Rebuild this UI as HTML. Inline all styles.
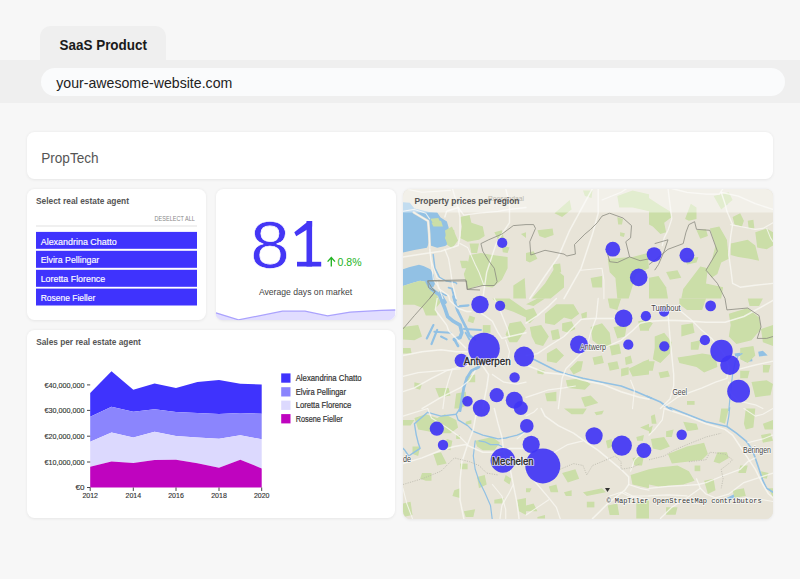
<!DOCTYPE html>
<html><head><meta charset="utf-8">
<style>
*{margin:0;padding:0;box-sizing:border-box}
html,body{width:800px;height:579px;overflow:hidden;background:#f7f7f7;font-family:"Liberation Sans",sans-serif;position:relative}
.a{position:absolute}
.card{position:absolute;background:#fff;border-radius:7.5px;box-shadow:0 0.5px 3px rgba(0,0,0,0.07)}
svg{position:absolute;left:0;top:0}
text{font-family:"Liberation Sans",sans-serif}
</style></head><body>
<div class="a" style="left:0;top:60px;width:800px;height:43px;background:#efefef"></div>
<div class="a" style="left:40px;top:26px;width:126px;height:40px;background:#efefef;border-radius:11px 11px 0 0"></div>
<div class="a" style="left:41px;top:68px;width:744px;height:28px;background:#fafbfc;border-radius:14px"></div>

<div class="card" style="left:27px;top:132px;width:746px;height:47px"></div>
<div class="card" style="left:26.5px;top:189px;width:179.5px;height:131.3px"></div>
<div class="card" style="left:215.5px;top:189px;width:180px;height:131.3px;overflow:hidden"></div>
<div class="card" style="left:27px;top:330px;width:368px;height:188px"></div>
<div class="card" id="map" style="left:403px;top:188.5px;width:370px;height:330px;overflow:hidden;background:#e8e4d8"><svg width="370" height="330" viewBox="403 188.5 370 330" style="position:absolute;left:0;top:0">
<defs><filter id="bl" x="0" y="0" width="1" height="1"><feGaussianBlur stdDeviation="0.35"/></filter></defs>
<rect x="403" y="188.5" width="370" height="330" fill="#e8e4d8"/>
<g filter="url(#bl)"><g fill="#92c1e4">
<polygon points="403.0,201.7 409.8,202.3 414.4,208.0 429.2,211.4 437.2,211.9 440.6,217.1 446.9,221.1 448.6,226.8 449.8,235.9 448.6,242.7 445.2,245.6 437.2,247.3 430.4,245.0 429.2,241.6 427.0,247.3 414.4,249.6 403.0,251.9"/>
<polygon points="403.0,268.8 409.8,266.5 419.0,264.3 423.5,265.4 430.4,268.8 433.8,274.5 434.4,280.2 434.9,283.6 433.2,287.1 429.2,285.9 427.0,281.4 420.1,280.2 412.1,282.5 403.0,285.4"/>
<polygon points="723.1,199.4 726.9,199.4 727.8,204.1 724.0,204.1"/>
<polygon points="743.9,356.9 751.5,355.0 752.5,360.7 744.9,361.6"/>
<polygon points="758.2,351.2 762.9,350.2 767.7,355.0 759.1,355.9"/>
<polygon points="734.5,353.1 742.0,352.1 743.0,355.0 735.4,355.9"/>
<polygon points="726.9,497.3 734.5,493.5 736.4,497.3 728.8,499.2"/>
</g>
<g fill="#cbdea8">
<polygon points="403.0,285.4 412.1,282.5 420.1,280.2 427.0,281.4 430.4,288.2 437.2,295.0 440.6,301.9 434.9,308.7 425.8,308.7 414.4,304.2 403.0,304.2"/>
<polygon points="430.4,218.2 438.3,217.6 440.6,222.2 432.6,222.2"/>
<polygon points="445.0,230.0 452.0,226.0 458.0,240.0 452.0,248.0 447.0,244.0"/>
<polygon points="460.0,216.5 469.5,214.6 471.4,222.2 482.8,226.0 484.7,235.5 479.0,239.3 467.6,241.2 460.0,237.4 461.9,226.0"/>
<polygon points="448.6,227.9 454.3,229.8 454.3,241.2 448.6,245.0 444.8,237.4"/>
<polygon points="469.5,243.1 479.0,243.1 477.1,252.6 471.4,252.6"/>
<polygon points="469.5,254.5 480.9,252.6 492.4,254.5 507.6,256.4 507.6,267.8 501.9,279.3 492.4,286.9 479.0,285.0 467.6,288.8 463.8,273.6 467.6,264.0"/>
<polygon points="460.0,260.2 467.6,260.2 469.5,267.8 461.9,267.8"/>
<polygon points="494.3,231.7 501.9,229.8 503.8,237.4 498.1,239.3"/>
<polygon points="501.9,245.0 509.5,246.9 507.6,252.6 502.8,251.7"/>
<polygon points="513.3,285.0 524.7,277.4 526.0,298.1 513.3,298.1"/>
<polygon points="520.9,233.6 526.0,231.7 526.0,237.4"/>
<polygon points="431.5,222.2 441.0,220.3 442.9,226.0 433.4,226.0"/>
<polygon points="403.0,326.5 418.2,324.6 422.0,336.0 414.4,339.8 403.0,338.9"/>
<polygon points="403.0,347.4 410.6,347.4 411.6,353.1 403.0,353.1"/>
<polygon points="435.3,387.4 448.6,387.4 450.5,395.0 439.1,396.9"/>
<polygon points="465.7,375.9 475.2,374.0 475.2,381.7 466.7,381.7"/>
<polygon points="456.2,393.1 465.7,391.2 467.6,404.5 460.0,408.1 454.3,408.1"/>
<polygon points="469.5,315.1 475.2,317.0 473.3,322.7 467.6,320.8"/>
<polygon points="482.8,324.6 490.5,324.6 490.5,332.2 482.8,332.2"/>
<polygon points="509.5,322.7 520.9,320.8 526.0,328.4 517.1,341.7 509.5,341.7 505.7,334.1"/>
<polygon points="492.4,298.0 509.5,298.0 526.0,309.4 526.0,317.0 513.3,311.3 501.9,307.5"/>
<polygon points="422.0,305.6 435.3,305.6 437.2,315.1 425.8,315.1"/>
<polygon points="414.4,381.7 422.0,383.6 420.1,389.3 414.4,387.4"/>
<polygon points="414.4,417.5 425.8,413.7 437.2,417.5 444.8,413.7 456.2,419.4 458.1,427.0 450.5,432.7 437.2,432.7 427.7,430.8 418.2,428.9"/>
<polygon points="403.0,419.4 414.4,419.4 410.6,425.1 403.0,425.1"/>
<polygon points="465.7,421.3 471.4,419.4 471.4,423.2 465.7,424.2"/>
<polygon points="456.2,434.6 460.0,434.6 460.0,438.4 456.2,438.4"/>
<polygon points="446.7,438.4 452.4,440.3 450.5,449.8 444.8,447.9"/>
<polygon points="433.4,453.6 441.0,451.7 446.7,463.1 437.2,465.0"/>
<polygon points="422.0,472.6 431.5,472.6 431.5,480.2 425.8,480.2 420.1,478.3"/>
<polygon points="403.0,503.1 410.6,501.2 412.5,514.5 403.0,516.4"/>
<polygon points="475.2,440.3 492.4,436.5 500.0,442.2 494.3,449.8 482.8,449.8 477.1,446.0"/>
<polygon points="460.0,463.1 467.6,463.1 467.6,468.8 460.0,468.8"/>
<polygon points="477.1,476.4 484.7,474.5 486.7,484.0 479.0,487.8"/>
<polygon points="454.3,489.7 460.0,487.8 460.0,497.4 452.4,495.5"/>
<polygon points="494.3,499.3 503.8,497.4 501.9,503.1 494.3,503.1"/>
<polygon points="463.8,510.7 475.2,508.8 473.3,516.4 465.7,516.4"/>
<polygon points="505.7,474.5 511.4,478.3 509.5,484.0 503.8,480.2"/>
<polygon points="517.1,499.3 526.0,497.4 526.0,514.5 519.0,510.7"/>
<polygon points="412.5,446.0 420.1,446.0 418.2,455.5 412.5,453.6"/>
<polygon points="554.5,212.7 569.7,199.4 571.6,208.9 562.1,216.5"/>
<polygon points="537.4,229.8 552.6,227.9 553.6,234.6 545.0,237.4 539.3,235.5"/>
<polygon points="526.0,252.6 533.6,250.7 537.4,258.3 529.8,262.1 526.0,260.2"/>
<polygon points="531.7,298.1 545.0,283.1 554.5,267.8 564.0,275.5 564.0,286.9 550.7,298.1"/>
<polygon points="590.6,277.4 602.0,275.5 602.0,286.9 592.5,286.9"/>
<polygon points="607.7,258.3 632.5,256.4 647.7,252.6 649.0,267.8 636.3,273.6 628.7,298.1 617.3,298.1 615.4,277.4 609.7,271.7"/>
<polygon points="617.3,216.5 623.0,218.4 622.0,224.1 618.2,224.1"/>
<polygon points="620.1,231.7 624.9,232.7 623.9,236.5 620.1,235.5"/>
<polygon points="617.3,195.6 632.5,189.9 649.0,193.7 649.0,210.8 632.5,207.0 619.2,207.0"/>
<polygon points="583.0,189.9 592.5,189.9 591.6,197.5 584.9,195.6"/>
<polygon points="552.6,264.0 560.2,263.1 561.2,271.7 554.5,273.6"/>
<polygon points="526.0,309.4 533.6,307.5 537.4,315.1 529.8,322.7 526.0,320.8"/>
<polygon points="545.0,313.2 556.4,303.7 573.5,303.7 579.2,313.2 571.6,318.9 564.0,317.0 554.5,324.6 545.0,322.7"/>
<polygon points="562.1,322.7 571.6,320.8 575.4,328.4 567.8,332.2 562.1,330.3"/>
<polygon points="529.8,326.5 541.2,324.6 548.8,336.0 543.1,345.5 535.5,343.6 531.7,336.0"/>
<polygon points="550.7,330.3 558.3,328.4 560.2,337.9 552.6,339.8"/>
<polygon points="526.0,303.7 537.4,298.0 545.0,298.0 533.6,305.6"/>
<polygon points="581.1,313.2 586.8,311.3 586.8,317.0 582.1,318.0"/>
<polygon points="590.6,326.5 602.0,322.7 609.7,332.2 611.6,345.5 602.0,347.4 592.5,339.8"/>
<polygon points="609.7,345.5 619.2,343.6 621.1,353.1 611.6,355.0"/>
<polygon points="607.7,298.0 621.1,298.0 617.3,309.4 609.7,307.5"/>
<polygon points="613.5,326.5 626.8,324.6 624.9,336.0 617.3,337.9"/>
<polygon points="638.2,320.8 649.0,318.9 649.0,330.3 640.1,330.3"/>
<polygon points="577.3,360.7 583.0,360.7 581.1,370.2 573.5,374.0 569.7,368.3"/>
<polygon points="546.9,353.1 556.4,347.4 564.0,355.0 556.4,362.6 546.9,360.7"/>
<polygon points="592.5,356.9 602.0,355.0 603.9,362.6 594.4,364.5"/>
<polygon points="607.7,362.6 617.3,360.7 619.2,368.3 609.7,370.2"/>
<polygon points="624.9,356.9 630.6,355.0 632.5,362.6 625.8,364.5"/>
<polygon points="628.7,368.3 643.9,360.7 649.0,358.8 649.0,374.0 632.5,375.9"/>
<polygon points="565.9,379.7 581.1,377.8 590.6,383.6 584.9,389.3 567.8,387.4"/>
<polygon points="581.1,396.9 590.6,395.0 598.2,402.6 584.9,406.4"/>
<polygon points="621.1,368.3 628.7,366.4 628.7,374.0 621.1,375.9"/>
<polygon points="545.0,393.1 556.4,391.2 556.4,400.7 546.9,400.7"/>
<polygon points="537.4,368.3 545.0,370.2 543.1,374.0 537.4,373.1"/>
<polygon points="564.0,408.0 586.8,408.0 583.0,413.7 571.6,413.7"/>
<polygon points="594.4,411.8 603.9,409.9 602.0,413.7 596.3,414.7"/>
<polygon points="605.8,440.3 611.6,438.4 613.5,446.0 607.7,447.9"/>
<polygon points="562.1,472.6 575.4,468.8 579.2,478.3 567.8,482.1"/>
<polygon points="548.8,485.9 556.4,484.0 558.3,491.7 550.7,491.7"/>
<polygon points="564.0,491.7 571.6,489.7 571.6,495.5 565.9,495.5"/>
<polygon points="583.0,491.7 602.0,487.8 605.8,491.7 586.8,495.5"/>
<polygon points="632.5,457.4 643.9,455.5 642.0,465.0 634.4,465.0"/>
<polygon points="630.6,474.5 649.0,468.8 649.0,487.8 632.5,484.0"/>
<polygon points="636.3,436.5 643.9,434.6 642.9,440.3 637.2,440.3"/>
<polygon points="640.1,427.0 649.0,423.2 649.0,430.8"/>
<polygon points="526.0,487.8 531.7,487.8 529.8,491.7 526.0,491.7"/>
<polygon points="526.0,505.0 533.6,503.1 537.4,510.7 526.0,510.7"/>
<polygon points="607.7,505.0 617.3,503.1 619.2,514.5 609.7,514.5"/>
<polygon points="636.3,503.1 649.0,499.3 649.0,518.1 636.3,518.1"/>
<polygon points="586.8,501.2 594.4,501.2 594.4,506.9 586.8,506.9"/>
<polygon points="537.4,516.4 545.0,514.5 545.0,518.1 537.4,518.1"/>
<polygon points="649.0,197.5 660.4,205.1 669.9,210.8 671.8,216.5 664.2,222.2 666.1,231.7 660.4,233.6 652.8,226.0 649.0,224.1"/>
<polygon points="685.1,218.4 690.8,203.2 696.5,207.0 696.5,218.4 688.9,220.3"/>
<polygon points="696.5,229.8 706.0,228.8 707.9,235.5 700.3,238.3"/>
<polygon points="709.8,227.9 719.3,226.0 726.9,239.3 728.8,258.3 721.2,262.1 717.4,273.5 711.7,277.3 706.0,269.7 711.7,260.2 715.5,245.0"/>
<polygon points="730.7,243.1 747.7,239.3 755.3,245.0 759.1,260.2 749.6,258.3 738.3,256.4 730.7,254.5"/>
<polygon points="732.6,216.5 740.2,212.7 743.9,220.3 742.0,226.0 734.5,224.1"/>
<polygon points="747.7,220.3 753.4,219.3 754.4,227.9 748.7,227.9"/>
<polygon points="755.3,231.7 766.7,227.9 773.0,231.7 773.0,245.0 766.7,248.8 757.2,246.9"/>
<polygon points="649.0,277.3 658.5,275.4 666.1,286.7 668.0,298.0 649.0,298.0"/>
<polygon points="666.1,271.6 677.5,269.7 681.3,277.3 669.9,279.2"/>
<polygon points="683.2,288.6 700.3,265.9 707.9,267.8 706.0,282.9 723.1,286.7 721.2,298.0 681.3,298.0"/>
<polygon points="685.1,258.3 698.4,256.4 696.5,262.1 687.0,264.0"/>
<polygon points="713.6,195.6 728.8,191.8 732.6,199.4 721.2,208.9"/>
<polygon points="679.4,298.0 706.0,298.0 702.2,309.4 687.0,309.4 679.4,303.7"/>
<polygon points="649.0,320.8 652.8,322.7 649.0,328.4"/>
<polygon points="681.3,324.6 692.7,322.7 694.6,332.2 681.3,336.0"/>
<polygon points="654.7,336.0 664.2,332.2 671.8,341.7 669.9,353.1 660.4,362.6 652.8,358.8 654.7,347.4"/>
<polygon points="649.0,360.7 654.7,360.7 652.8,370.2 649.0,370.2"/>
<polygon points="728.8,313.2 747.7,307.5 759.1,317.0 761.0,328.4 751.5,339.8 736.4,343.6 728.8,336.0 730.7,324.6"/>
<polygon points="740.2,347.4 753.4,345.5 755.3,355.0 747.7,362.6 740.2,358.8"/>
<polygon points="747.7,298.0 762.9,298.0 759.1,305.6 749.6,305.6"/>
<polygon points="761.0,328.4 773.0,324.6 773.0,345.5 762.9,341.7"/>
<polygon points="677.5,356.9 690.8,355.0 702.2,353.1 715.5,355.0 717.4,366.4 704.1,372.1 696.5,366.4 679.4,362.6"/>
<polygon points="690.8,341.7 700.3,339.8 698.4,349.3 690.8,349.3"/>
<polygon points="658.5,372.1 668.0,370.2 669.9,375.9 660.4,377.8"/>
<polygon points="751.5,381.6 766.7,379.7 773.0,383.5 770.5,394.8 755.3,396.7"/>
<polygon points="740.2,370.2 749.6,370.2 747.7,377.8 740.2,377.8"/>
<polygon points="687.0,400.5 694.6,400.5 694.6,404.3 687.0,404.3"/>
<polygon points="762.9,364.5 770.5,364.5 768.6,372.1 762.9,372.1"/>
<polygon points="650.9,415.6 654.7,413.7 656.6,423.2 651.8,423.2"/>
<polygon points="649.0,427.0 652.8,425.1 650.9,432.7 649.0,432.7"/>
<polygon points="683.2,421.3 696.5,423.2 698.4,428.9 687.0,430.8"/>
<polygon points="666.1,430.8 673.7,428.9 671.8,436.5 666.1,436.5"/>
<polygon points="650.9,438.4 664.2,436.5 669.9,446.0 660.4,449.8 652.8,447.9"/>
<polygon points="668.0,453.6 687.0,446.0 704.1,442.2 707.9,453.6 702.2,459.3 687.0,461.2 671.8,463.1"/>
<polygon points="649.0,468.8 658.5,466.9 677.5,465.0 688.9,470.7 694.6,480.2 683.2,484.0 658.5,485.9 649.0,484.0"/>
<polygon points="717.4,451.7 726.9,451.7 728.8,457.4 719.3,463.1 713.6,461.2"/>
<polygon points="721.2,408.0 728.8,408.0 725.0,423.2 719.3,421.3"/>
<polygon points="745.8,408.0 755.3,408.0 753.4,427.0 745.8,428.9 743.9,423.2"/>
<polygon points="762.9,423.2 773.0,419.4 773.0,428.9 764.8,428.9"/>
<polygon points="761.0,434.6 770.5,432.7 773.0,440.3 762.9,442.2"/>
<polygon points="740.2,465.0 747.7,465.0 745.8,472.6 738.3,472.6"/>
<polygon points="704.1,480.2 713.6,478.3 715.5,489.7 707.9,493.5"/>
<polygon points="732.6,489.7 743.9,487.8 745.8,495.4 734.5,497.3"/>
<polygon points="694.6,465.0 700.3,465.0 700.3,470.7 694.6,470.7"/>
<polygon points="761.0,470.7 768.6,472.6 766.7,478.3 762.0,477.3"/>
<polygon points="768.6,487.8 773.0,487.8 773.0,497.3"/>
<polygon points="666.1,506.7 677.5,506.7 675.6,514.3 666.1,514.3"/>
</g>
<g fill="none" stroke="#e8e4d8" stroke-linecap="round" stroke-linejoin="round">
<polyline stroke-width="2.6" points="413.8,212.0 428.1,220.5 429.2,233.6 429.8,247.3"/>
</g>
<g fill="none" stroke="#92c1e4" stroke-linejoin="round" stroke-linecap="round">
<polyline stroke-width="3.4" points="427.0,281.4 430.9,288.2 437.2,292.8 441.8,296.2 445.2,301.9"/>
<polyline stroke-width="1.5" points="433.2,254.0 434.9,267.7 439.5,276.8 445.2,280.2 455.5,281.9 456.6,283.1"/>
<polyline stroke-width="1.8" points="448.6,287.1 452.0,288.2 454.3,297.3 456.0,300.0"/>
<polyline stroke-width="1.5" points="439.5,291.6 446.3,295.0"/>
<polyline stroke-width="1.5" points="456.6,306.5 468.0,305.3"/>
<polyline stroke-width="3.6" points="440.1,296.1 444.8,307.5 447.7,316.1 453.4,320.8 460.0,324.6 461.9,332.2 460.0,337.0 454.3,338.9"/>
<polyline stroke-width="2.6" points="453.4,296.1 457.2,309.4 461.9,318.9 466.7,328.4 469.5,335.1 475.2,338.9"/>
<polyline stroke-width="2.0" points="460.0,305.6 468.6,304.7"/>
<polyline stroke-width="2.0" points="463.8,328.4 480.9,329.4"/>
<polyline stroke-width="2.0" points="465.7,332.2 469.5,338.9"/>
<polyline stroke-width="2.6" points="454.3,338.9 458.1,345.5"/>
<polyline stroke-width="2.2" points="433.4,324.6 426.8,337.9"/>
<polyline stroke-width="2.2" points="437.2,329.4 431.5,343.6"/>
<polyline stroke-width="2.0" points="434.4,331.3 450.5,332.2"/>
<polyline stroke-width="2.0" points="441.0,336.0 446.7,338.9"/>
<polyline stroke-width="2.8" points="479.0,366.4 471.4,370.2 466.7,377.8 463.8,387.4 461.9,398.8 460.0,410.2"/>
<polyline stroke-width="1.4" points="460.0,408.0 456.2,413.7 441.0,415.6 427.7,411.8 414.4,423.2 416.3,434.6 418.2,442.2 420.1,447.9 414.4,451.7 408.7,455.5 404.9,449.8 401.1,446.0"/>
<polyline stroke-width="1.3" points="456.2,413.7 458.1,419.4 467.6,425.1 473.3,430.8 482.8,434.6 490.5,436.5 498.1,438.4 505.7,437.5 517.1,434.6 528.5,429.9"/>
<polyline stroke-width="1.2" points="475.2,440.3 473.3,455.5 475.2,468.8 479.0,480.2 484.7,491.7 490.5,505.0 492.4,520.2"/>
<polyline stroke-width="1.2" points="479.0,440.3 484.7,441.3 490.5,444.1 498.1,444.1 501.9,446.0"/>
<polyline stroke-width="1.6" points="533.6,358.8 545.0,364.5 556.4,370.2 567.8,374.0 583.0,377.8 602.0,381.7 621.1,385.5 636.3,391.2 651.5,397.8"/>
<polyline stroke-width="1.6" points="647.1,395.8 660.4,401.5 671.8,410.0"/>
<polyline stroke-width="1.2" points="728.8,410.0 730.7,389.2 732.6,374.0 735.4,360.7 738.3,355.0 742.0,353.1"/>
<polyline stroke-width="1.6" points="669.9,407.1 687.0,413.7 706.0,421.3 726.9,426.0 736.4,432.7 745.8,440.3 751.5,447.9 755.3,457.4 759.1,468.8 762.9,480.2 766.7,487.8 774.3,492.5"/>
<polyline stroke-width="1.2" points="726.9,426.0 728.8,415.6 729.7,407.1"/>
</g>
<g fill="none" stroke="#f9f8f3" stroke-opacity="0.8" stroke-linejoin="round" stroke-linecap="round">
<polyline stroke-width="1.1" points="413.8,212.0 428.1,220.5 429.2,233.6 429.8,247.3 431.0,260.0 437.0,277.0 445.0,281.0"/>
<polyline stroke-width="1.4" points="437.2,280.0 438.5,288.0 448.6,295.0 449.8,300.0 457.7,307.6 466.8,311.0 471.0,311.0"/>
<polyline stroke-width="1.5" points="403.0,256.4 422.0,253.6 441.0,250.7 458.1,245.0 460.0,235.5 460.0,216.5 458.1,207.0 446.7,210.8 444.8,216.5"/>
<polyline stroke-width="1.3" points="458.1,207.0 463.8,214.6 479.0,212.7 498.1,210.8 509.5,208.9 526.0,207.0"/>
<polyline stroke-width="1.2" points="452.4,188.0 458.1,207.0"/>
<polyline stroke-width="1.4" points="505.7,188.0 509.5,203.2 509.5,222.2 501.9,233.6 496.2,243.1 492.4,254.5 486.7,271.7 482.8,298.1"/>
<polyline stroke-width="1.3" points="444.8,248.8 448.6,258.3 450.5,269.7 452.4,283.1 456.2,298.1"/>
<polyline stroke-width="1.2" points="429.6,248.8 431.5,264.0 433.4,279.3 439.1,286.9 442.9,298.1"/>
<polyline stroke-width="1.1" points="403.0,210.8 414.4,208.9 425.8,212.7 429.6,218.4"/>
<polyline stroke-width="1.1" points="403.0,188.0 422.0,191.8 450.5,189.9"/>
<polyline stroke-width="1.1" points="460.0,243.1 467.6,246.9 475.2,264.0 479.0,271.7 484.7,286.9"/>
<polyline stroke-width="1.6" points="403.0,355.0 422.0,351.2 441.0,349.3 456.2,351.2 467.6,351.2"/>
<polyline stroke-width="1.4" points="403.0,391.2 414.4,387.4 431.5,377.8 446.7,370.2 460.0,366.4 471.4,364.5"/>
<polyline stroke-width="1.4" points="437.2,298.0 435.3,309.4 441.0,317.0 446.7,324.6 448.6,330.3 454.3,336.0 460.0,341.7 465.7,347.4"/>
<polyline stroke-width="1.4" points="475.2,309.4 484.7,315.1 492.4,320.8 498.1,332.2 501.9,337.9 509.5,336.0 526.0,332.2"/>
<polyline stroke-width="1.3" points="494.3,298.0 500.0,309.4 503.8,318.9 507.6,328.4 509.5,336.0"/>
<polyline stroke-width="1.5" points="480.9,362.6 488.6,374.0 486.7,387.4 484.7,396.9 482.8,408.1"/>
<polyline stroke-width="1.3" points="492.4,374.0 503.8,381.7 517.1,383.6 526.0,381.7"/>
<polyline stroke-width="1.3" points="475.2,370.2 469.5,379.7 460.0,387.4 441.0,396.9 422.0,408.1"/>
<polyline stroke-width="1.3" points="403.0,375.9 418.2,372.1 441.0,370.2 460.0,368.3"/>
<polyline stroke-width="1.1" points="505.7,339.8 509.5,351.2 507.6,360.7"/>
<polyline stroke-width="1.2" points="452.4,368.3 448.6,379.7 444.8,393.1 442.9,408.1"/>
<polyline stroke-width="1.5" points="403.0,463.1 422.0,457.4 441.0,449.8 454.3,446.0 465.7,444.1 482.8,451.7 498.1,451.7 509.5,447.9 526.0,447.9"/>
<polyline stroke-width="1.5" points="477.1,408.0 473.3,428.9 467.6,444.1 461.9,461.2 460.0,480.2 460.0,499.3 463.8,518.1"/>
<polyline stroke-width="1.4" points="494.3,408.0 498.1,423.2 501.9,436.5 503.8,451.7 509.5,465.0 513.3,484.0 517.1,503.1 519.0,518.1"/>
<polyline stroke-width="1.2" points="427.7,408.0 431.5,417.5 446.7,427.0 460.0,436.5 467.6,444.1"/>
<polyline stroke-width="1.1" points="403.0,415.6 427.7,408.0"/>
<polyline stroke-width="1.2" points="500.0,518.1 501.9,505.0 509.5,491.7 513.3,484.0"/>
<polyline stroke-width="1.1" points="492.4,484.0 501.9,495.5 505.7,508.8 505.7,518.1"/>
<polyline stroke-width="1.1" points="403.0,487.8 406.8,503.1 412.5,518.1"/>
<polyline stroke-width="1.1" points="517.1,438.4 526.0,430.8"/>
<polyline stroke-width="1.5" points="529.8,298.1 545.0,275.5 558.3,256.4 569.7,229.8 581.1,208.9 592.5,188.0"/>
<polyline stroke-width="1.5" points="564.0,298.1 581.1,267.8 592.5,233.6 598.2,212.7 598.2,188.0"/>
<polyline stroke-width="1.1" points="581.1,269.7 602.0,267.8 603.9,279.3 603.9,298.1"/>
<polyline stroke-width="1.1" points="602.0,199.4 621.1,191.8 626.8,188.0"/>
<polyline stroke-width="1.4" points="526.0,322.7 537.4,315.1 548.8,305.6 556.4,298.0"/>
<polyline stroke-width="1.4" points="526.0,355.0 537.4,353.1 548.8,345.5 564.0,336.0 575.4,324.6 581.1,318.9 592.5,318.0 613.5,318.0"/>
<polyline stroke-width="1.3" points="598.2,298.0 596.3,317.0 590.6,332.2 588.7,339.8 584.9,349.3 575.4,358.8 565.9,368.3 562.1,377.8 560.2,393.1 558.3,408.1"/>
<polyline stroke-width="1.6" points="526.0,364.5 545.0,372.1 564.0,374.0 583.0,379.7 602.0,383.6 621.1,391.2 640.1,396.9 649.0,398.8"/>
<polyline stroke-width="1.4" points="603.9,347.4 621.1,339.8 632.5,330.3 640.1,322.7 649.0,320.8"/>
<polyline stroke-width="1.1" points="630.6,379.7 634.4,389.3 632.5,408.1"/>
<polyline stroke-width="1.2" points="526.0,396.9 537.4,393.1 548.8,389.3 564.0,387.4 575.4,385.5"/>
<polyline stroke-width="1.5" points="541.2,408.0 545.0,415.6 558.3,425.1 573.5,432.7 586.8,442.2 598.2,449.8 609.7,459.3 621.1,468.8 628.7,476.4 628.7,484.0 624.9,489.7 617.3,495.5 607.7,503.1 598.2,512.6 592.5,518.1"/>
<polyline stroke-width="1.2" points="554.5,451.7 567.8,444.1 583.0,440.3"/>
<polyline stroke-width="1.2" points="628.7,484.0 640.1,487.8 649.0,489.7"/>
<polyline stroke-width="1.2" points="624.9,491.7 632.5,495.5 649.0,495.5"/>
<polyline stroke-width="1.3" points="526.0,470.7 537.4,484.0 548.8,497.4 556.4,506.9 560.2,518.1"/>
<polyline stroke-width="1.1" points="526.0,514.5 537.4,506.9 548.8,499.3"/>
<polyline stroke-width="1.1" points="537.4,408.0 533.6,411.8 526.0,415.6"/>
<polyline stroke-width="1.1" points="630.6,470.7 634.4,459.3 640.1,453.6 647.7,447.9"/>
<polyline stroke-width="1.2" points="609.7,495.5 621.1,491.7 628.7,495.5 640.1,497.4 649.0,499.3"/>
<polyline stroke-width="1.3" points="668.0,188.0 669.9,203.2 671.8,218.4 668.0,229.8 664.2,237.4 662.3,245.0"/>
<polyline stroke-width="1.3" points="671.8,188.0 687.0,191.8 706.0,193.7 719.3,193.7 723.1,188.0"/>
<polyline stroke-width="1.4" points="721.2,191.8 725.0,203.2 726.9,210.8 732.6,224.1 730.7,235.5 728.8,254.5 730.7,267.8 732.6,282.9 740.2,286.7 755.3,284.8 773.0,282.9"/>
<polyline stroke-width="1.3" points="721.2,191.8 738.3,195.6 755.3,203.2 773.0,208.9"/>
<polyline stroke-width="1.2" points="730.7,224.1 740.2,226.0 755.3,228.8 762.9,227.9 773.0,222.2"/>
<polyline stroke-width="1.1" points="766.7,227.9 770.5,237.4 773.0,241.2"/>
<polyline stroke-width="1.6" points="649.0,320.8 668.0,319.8 687.0,320.4 706.0,321.7 725.0,321.7 743.9,316.0 762.9,305.6 773.0,299.9"/>
<polyline stroke-width="1.4" points="668.0,313.2 669.9,336.0 671.8,355.0 673.7,374.0 673.7,385.4 669.9,398.6 660.4,408.0"/>
<polyline stroke-width="1.3" points="679.4,309.4 690.8,318.9 700.3,328.4 711.7,337.9 719.3,347.4 725.0,355.0 728.8,366.4 726.9,377.8 715.5,381.6 702.2,387.3 687.0,392.9 677.5,396.7 664.2,406.2"/>
<polyline stroke-width="1.3" points="740.2,368.3 755.3,364.5 773.0,360.7"/>
<polyline stroke-width="1.2" points="728.8,381.6 730.7,392.9 738.3,400.5 755.3,404.3 762.9,408.0"/>
<polyline stroke-width="1.5" points="664.2,408.0 687.0,415.6 706.0,423.2 725.0,428.9 732.6,434.6 740.2,446.0 747.7,457.4 755.3,468.8 762.9,484.0 768.6,493.5 773.0,497.3"/>
<polyline stroke-width="1.2" points="664.2,408.0 662.3,419.4 654.7,428.9 649.0,434.6"/>
<polyline stroke-width="1.3" points="649.0,487.8 668.0,485.9 687.0,484.9 698.4,484.0 706.0,482.1 725.0,474.5 740.2,468.8 747.7,461.2 755.3,457.4"/>
<polyline stroke-width="1.3" points="696.5,478.3 700.3,487.8 706.0,493.5 715.5,497.3 728.8,493.5 743.9,482.1 755.3,478.3 773.0,472.6"/>
<polyline stroke-width="1.2" points="700.3,487.8 687.0,497.3 671.8,506.7 660.4,518.0"/>
<polyline stroke-width="1.1" points="649.0,495.4 668.0,494.4 687.0,495.4"/>
<polyline stroke-width="1.1" points="743.9,408.0 755.3,415.6 762.9,413.7 773.0,408.0"/>
<polyline stroke-width="1.1" points="747.7,442.2 762.9,438.4 773.0,434.6"/>
<polyline stroke-width="1.1" points="732.6,499.2 747.7,497.3 762.9,499.2 773.0,501.0"/>
</g>
<g fill="none" stroke="#b5b3a8" stroke-width="0.7" stroke-dasharray="1.2 1.2">
<polyline points="403.0,484.0 422.0,478.3 441.0,470.7 454.3,457.4 469.5,461.2 479.0,465.0 486.7,472.6 498.1,474.5"/>
<polyline points="560.2,468.8 573.5,463.1 583.0,465.0 586.8,474.5 592.5,465.0 602.0,461.2 615.4,455.5 621.1,461.2 621.1,468.8 632.5,466.9 640.1,463.1"/>
<polyline points="649.0,459.3 664.2,455.5 673.7,449.8 687.0,444.1 706.0,436.5 721.2,432.7"/>
<polyline points="688.9,461.2 706.0,459.3 709.8,451.7 725.0,453.6 732.6,459.3 728.8,463.1 721.2,468.8 723.1,478.3 721.2,487.8"/>
</g>
<g fill="none" stroke="#8a8a80" stroke-width="0.8" stroke-linejoin="round">
<polyline points="427.7,280.5 452.2,280.5 466.5,280.5 467.0,289.0 480.0,289.5"/>
<polyline points="427.7,280.5 428.5,287.0 435.0,291.0 429.6,298.0"/>
<polyline points="480.9,243.1 488.6,239.3 501.9,233.6 513.3,225.1 526.0,224.1"/>
<polyline points="480.9,243.1 482.8,250.7 488.6,260.2 494.3,267.8 497.1,281.2 494.3,285.0 482.8,285.0 467.6,288.8 465.7,279.3 427.7,280.2 431.5,286.9 435.3,290.7 429.6,298.1"/>
<polyline points="403.0,328.4 414.4,315.1 429.6,298.0"/>
<polyline points="526.0,224.1 533.6,224.1 535.5,227.9 529.8,241.2 530.8,254.5 545.0,249.8 564.0,253.6 566.9,255.5 575.4,253.6 574.5,244.1 584.9,233.6 590.6,228.9 597.3,222.2 602.0,215.6 609.7,212.7 623.0,217.5 631.5,225.1 630.6,237.4 625.8,241.2 629.6,256.4 640.1,260.2 649.0,258.3"/>
<polyline points="607.7,253.6 609.7,261.2 617.3,262.1 629.6,256.4"/>
<polyline points="649.0,264.0 656.6,258.3 668.0,248.8 683.2,243.1 686.0,231.7 688.9,224.1 694.6,221.2 696.5,228.8 709.8,229.8 717.4,250.7 706.0,269.7 717.4,282.9 725.0,298.0"/>
<polyline points="654.7,243.1 668.0,239.3 664.2,250.7 658.5,264.0 654.7,269.7"/>
<polyline points="725.0,298.0 726.9,309.4 747.7,307.5 759.1,315.1 761.0,326.5 757.2,337.9 766.7,337.9 773.0,336.0"/>
</g></g>
<rect x="403" y="188.5" width="370" height="23.5" fill="#fff" opacity="0.45"/>
<g font-size="8" fill="#b9b6ad"><text x="488" y="200" textLength="36" lengthAdjust="spacingAndGlyphs">Roosendaal</text></g>
<text x="414.4" y="203.5" font-size="9.8" font-weight="bold" fill="#555" textLength="105" lengthAdjust="spacingAndGlyphs">Property prices per region</text>
<g fill="#4035f5" fill-opacity="0.92">
<circle cx="502.2" cy="242.4" r="5.1"/>
<circle cx="480" cy="304" r="8.7"/>
<circle cx="500.1" cy="305.3" r="5.1"/>
<circle cx="484" cy="348" r="15.8"/>
<circle cx="524" cy="356" r="10"/>
<circle cx="579" cy="344" r="9"/>
<circle cx="612.8" cy="248.7" r="7.4"/>
<circle cx="654.1" cy="254.1" r="7.4"/>
<circle cx="686.9" cy="254.7" r="7.4"/>
<circle cx="638.7" cy="276.9" r="8.8"/>
<circle cx="710.6" cy="305.4" r="5.4"/>
<circle cx="623.6" cy="317.7" r="8.8"/>
<circle cx="645.9" cy="315.7" r="5.1"/>
<circle cx="664.1" cy="311.1" r="5.1"/>
<circle cx="628.3" cy="344.2" r="5.1"/>
<circle cx="664.3" cy="345.8" r="5.1"/>
<circle cx="704.9" cy="339.7" r="5.1"/>
<circle cx="721.5" cy="350.5" r="11.2"/>
<circle cx="730" cy="364.6" r="9.8"/>
<circle cx="738.6" cy="390.7" r="11.4"/>
<circle cx="594.1" cy="435.3" r="8.6"/>
<circle cx="621.8" cy="445.1" r="10.1"/>
<circle cx="643.9" cy="450" r="7.4"/>
<circle cx="681.7" cy="434.3" r="5.2"/>
<circle cx="461.4" cy="360" r="6.8"/>
<circle cx="514.6" cy="376.9" r="5.2"/>
<circle cx="496.7" cy="394.7" r="7.1"/>
<circle cx="467.5" cy="400.8" r="5.2"/>
<circle cx="481.4" cy="407.6" r="8.6"/>
<circle cx="514.3" cy="399.8" r="8.5"/>
<circle cx="520.8" cy="407.6" r="7"/>
<circle cx="436.8" cy="428.2" r="7.1"/>
<circle cx="443" cy="444.5" r="5.2"/>
<circle cx="526.8" cy="425.4" r="6.8"/>
<circle cx="531.2" cy="443.9" r="8.6"/>
<circle cx="502.9" cy="459.9" r="12.3"/>
<circle cx="542.8" cy="465.4" r="17.5"/>
</g>
<g font-size="10.5" fill="#333" stroke="#fff" stroke-width="2.2" stroke-opacity="0.75" stroke-linejoin="round">
<text x="463.8" y="364" textLength="46.8" lengthAdjust="spacingAndGlyphs">Antwerpen</text>
<text x="492.1" y="464.5" textLength="41.5" lengthAdjust="spacingAndGlyphs">Mechelen</text>
</g>
<g font-size="10.5" fill="#2a2a2a" stroke="#2a2a2a" stroke-width="0.3">
<text x="463.8" y="364" textLength="46.8" lengthAdjust="spacingAndGlyphs">Antwerpen</text>
<text x="492.1" y="464.5" textLength="41.5" lengthAdjust="spacingAndGlyphs">Mechelen</text>
</g>
<g font-size="8.5" fill="#444" stroke="#fff" stroke-width="1.6" stroke-opacity="0.8" paint-order="stroke" stroke-linejoin="round">
<text x="651.3" y="310" textLength="29.3" lengthAdjust="spacingAndGlyphs">Turnhout</text>
<text x="672.5" y="394.7" textLength="14.5" lengthAdjust="spacingAndGlyphs">Geel</text>
<text x="743" y="452.5" textLength="28" lengthAdjust="spacingAndGlyphs">Beringen</text>
<text x="403" y="461" textLength="8" lengthAdjust="spacingAndGlyphs">de</text>
<text x="580" y="349" textLength="26" lengthAdjust="spacingAndGlyphs">Antwerp</text>
</g>
<text x="606.4" y="502.9" style="font-family:'Liberation Mono',monospace" font-size="7" fill="#333" stroke="#fff" stroke-width="1.5" stroke-opacity="0.7" paint-order="stroke" textLength="155.2" lengthAdjust="spacingAndGlyphs">© MapTiler OpenStreetMap contributors</text>
<path d="M605,487.5 L610,487.5 L607.5,491.5 Z" fill="#333"/>
</svg></div>

<svg width="800" height="579" viewBox="0 0 800 579">
<!-- header texts -->
<text x="59.5" y="50" font-size="13.8" font-weight="bold" fill="#1a1a1a" textLength="87.5" lengthAdjust="spacingAndGlyphs">SaaS Product</text>
<text x="56.3" y="87.6" font-size="14.2" fill="#222" textLength="176" lengthAdjust="spacingAndGlyphs">your-awesome-website.com</text>
<text x="41.2" y="162.9" font-size="13.8" fill="#555" textLength="57.5" lengthAdjust="spacingAndGlyphs">PropTech</text>

<!-- agent card -->
<text x="36" y="204" font-size="9.8" font-weight="bold" fill="#555" textLength="93" lengthAdjust="spacingAndGlyphs">Select real estate agent</text>
<text x="154.6" y="220.7" font-size="7.3" fill="#888" textLength="40.2" lengthAdjust="spacingAndGlyphs">DESELECT ALL</text>
<rect x="36" y="225.5" width="161" height="1" fill="#e2e2e2"/>
<g fill="#3f33fd">
<rect x="36" y="231.9" width="161" height="16.9"/>
<rect x="36" y="250.8" width="161" height="17"/>
<rect x="36" y="269.8" width="161" height="17"/>
<rect x="36" y="288.6" width="161" height="16.9"/>
</g>
<g fill="#fff" font-size="8.7" stroke="#fff" stroke-width="0.15">
<text x="40.7" y="244.6" textLength="76" lengthAdjust="spacingAndGlyphs">Alexandrina Chatto</text>
<text x="40.7" y="263.3" textLength="58.6" lengthAdjust="spacingAndGlyphs">Elvira Pellingar</text>
<text x="40.7" y="281.9" textLength="64.5" lengthAdjust="spacingAndGlyphs">Loretta Florence</text>
<text x="40.7" y="300.6" textLength="54.6" lengthAdjust="spacingAndGlyphs">Rosene Fieller</text>
</g>

<!-- KPI -->
<text x="250.2" y="267.5" font-size="67" fill="#4436f5" stroke="#fff" stroke-width="0.6" textLength="39.5" lengthAdjust="spacingAndGlyphs">8</text>
<g fill="#4436f5">
<rect x="306.5" y="221" width="5.6" height="45.5"/>
<rect x="297" y="261.8" width="24.2" height="4.7"/>
<polygon points="308.5,221 312.1,221 312.1,226.5 296.2,236.2 294.3,232.2"/>
</g>
<path d="M331.3,266.5 V258.2 M327.6,261.6 L331.3,257.6 L335,261.6" fill="none" stroke="#22b322" stroke-width="1.35"/>
<text x="337.6" y="266.2" font-size="10.5" fill="#22b322" textLength="24" lengthAdjust="spacingAndGlyphs">0.8%</text>
<text x="258.9" y="294.5" font-size="9.6" fill="#444" textLength="93.3" lengthAdjust="spacingAndGlyphs">Average days on market</text>
<clipPath id="kc"><rect x="215.5" y="189" width="180" height="131.3" rx="7.5"/></clipPath>
<g clip-path="url(#kc)">
<path d="M215.9,312.8 L238.5,319.9 L282.4,311.2 L305,311.2 L327.6,315.9 L350.1,312.1 L381,310.4 L395.5,310 L395.5,320.3 L215.9,320.3 Z" fill="#e1ddff"/>
<path d="M215.9,312.8 L238.5,319.9 L282.4,311.2 L305,311.2 L327.6,315.9 L350.1,312.1 L381,310.4 L395.5,310" fill="none" stroke="#aaa2fd" stroke-width="1.3"/>
</g>

<!-- sales chart -->
<text x="36.2" y="345" font-size="9.8" font-weight="bold" fill="#555" textLength="104.7" lengthAdjust="spacingAndGlyphs">Sales per real estate agent</text>
<polygon fill="#3f33fd" points="90.2,393.1 111.5,371.3 133.3,389.7 154.6,383.6 176.0,388.1 197.4,381.9 219.0,380.1 240.3,383.7 261.7,384.6 261.7,413.8 240.3,412.9 219.0,414.0 197.4,412.9 176.0,412.0 154.6,409.2 133.3,411.7 111.5,406.8 90.2,416.7"/>
<polygon fill="#8b85fd" points="90.2,416.7 111.5,406.8 133.3,411.7 154.6,409.2 176.0,412.0 197.4,412.9 219.0,414.0 240.3,412.9 261.7,413.8 261.7,439.2 240.3,435.3 219.0,438.7 197.4,437.6 176.0,435.9 154.6,431.7 133.3,437.5 111.5,432.4 90.2,441.8"/>
<polygon fill="#dcd9fe" points="90.2,441.8 111.5,432.4 133.3,437.5 154.6,431.7 176.0,435.9 197.4,437.6 219.0,438.7 240.3,435.3 261.7,439.2 261.7,468.4 240.3,459.8 219.0,467.7 197.4,463.2 176.0,459.7 154.6,460.0 133.3,462.9 111.5,461.6 90.2,466.7"/>
<polygon fill="#bf04bf" points="90.2,466.7 111.5,461.6 133.3,462.9 154.6,460.0 176.0,459.7 197.4,463.2 219.0,467.7 240.3,459.8 261.7,468.4 261.7,487.5 90.2,487.5"/>
<g stroke="#333" stroke-width="0.9" fill="none">
<path d="M87,384.9H90.2 M87,410.4H90.2 M87,436.2H90.2 M87,462H90.2 M87,487.5H90.2"/>
<path d="M90.2,487.5V491 M133.3,487.5V491 M176,487.5V491 M219,487.5V491 M261.7,487.5V491"/>
</g>
<g font-size="8" fill="#333" stroke="#333" stroke-width="0.15" text-anchor="end">
<text x="84.5" y="387.8" textLength="40" lengthAdjust="spacingAndGlyphs">€40,000,000</text>
<text x="84.5" y="413.3" textLength="40" lengthAdjust="spacingAndGlyphs">€30,000,000</text>
<text x="84.5" y="439.1" textLength="40" lengthAdjust="spacingAndGlyphs">€20,000,000</text>
<text x="84.5" y="464.9" textLength="40" lengthAdjust="spacingAndGlyphs">€10,000,000</text>
<text x="84.5" y="490.4" textLength="9" lengthAdjust="spacingAndGlyphs">€0</text>
</g>
<g font-size="8" fill="#333" stroke="#333" stroke-width="0.15" text-anchor="middle">
<text x="90.2" y="498.2" textLength="15.6" lengthAdjust="spacingAndGlyphs">2012</text>
<text x="133.3" y="498.2" textLength="15.6" lengthAdjust="spacingAndGlyphs">2014</text>
<text x="176" y="498.2" textLength="15.6" lengthAdjust="spacingAndGlyphs">2016</text>
<text x="219" y="498.2" textLength="15.6" lengthAdjust="spacingAndGlyphs">2018</text>
<text x="261.7" y="498.2" textLength="15.6" lengthAdjust="spacingAndGlyphs">2020</text>
</g>
<rect x="281.2" y="373.4" width="9.3" height="9.3" fill="#3f33fd"/>
<rect x="281.2" y="387.2" width="9.3" height="9.3" fill="#8b85fd"/>
<rect x="281.2" y="400.6" width="9.3" height="9.3" fill="#dcd9fe"/>
<rect x="281.2" y="414.1" width="9.3" height="9.3" fill="#bf04bf"/>
<g font-size="8.5" fill="#333" stroke="#333" stroke-width="0.2">
<text x="295.7" y="381.2" textLength="66" lengthAdjust="spacingAndGlyphs">Alexandrina Chatto</text>
<text x="295.7" y="394.7" textLength="50.4" lengthAdjust="spacingAndGlyphs">Elvira Pellingar</text>
<text x="295.7" y="408.2" textLength="55.6" lengthAdjust="spacingAndGlyphs">Loretta Florence</text>
<text x="295.7" y="421.7" textLength="47" lengthAdjust="spacingAndGlyphs">Rosene Fieller</text>
</g>
</svg>
</body></html>
